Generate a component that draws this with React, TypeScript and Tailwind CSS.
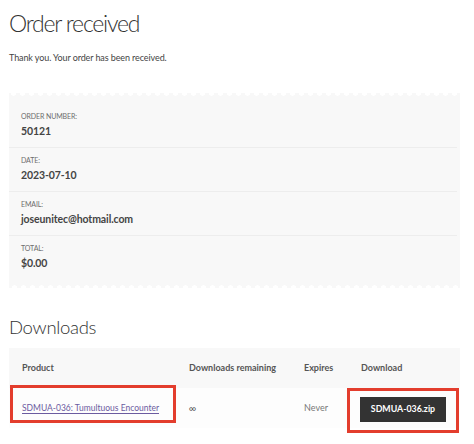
const font = { fontFamily: 'Lato, "Noto Sans", sans-serif' };

const overview = [
  { label: 'Order number:', value: '50121' },
  { label: 'Date:', value: '2023-07-10' },
  { label: 'Email:', value: 'joseunitec@hotmail.com' },
  { label: 'Total:', value: '$0.00' },
];

function Scallop() {
  return (
    <div className="h-[4px] w-full bg-[radial-gradient(circle_at_50%_0,white_2.5px,transparent_3px)] bg-[length:9px_4px]" />
  );
}

export default function App() {
  return (
    <div className="w-[474px] h-[444px] bg-white text-[#333] overflow-hidden" style={font}>
      <div className="px-[9px]">
        <h1 className="pt-[8px] text-[23px] leading-[30px] font-light tracking-[-1.2px] text-[#333]">Order received</h1>
        <p className="mt-[14px] text-[9px] leading-[12px] tracking-[-0.1px] text-[#444]">Thank you. Your order has been received.</p>

        <div className="mt-[29px] w-[451px] bg-[#f8f8f8]">
          <Scallop />
          <ul className="pt-[7px] pb-[4px] mr-[3px]">
            {overview.map((item, i) => (
              <li
                key={item.label}
                className={`h-[44px] pl-[12px] pt-[7px] ${i < overview.length - 1 ? 'border-b border-[#ededed]' : ''}`}
              >
                <div className="text-[7px] leading-[10px] uppercase text-[#6d6d6d] tracking-[-0.1px]">{item.label}</div>
                <div className="mt-[3px] text-[10.5px] leading-[14px] font-bold tracking-[-0.1px] text-[#444]">{item.value}</div>
              </li>
            ))}
          </ul>
          <div className="rotate-180">
            <Scallop />
          </div>
        </div>

        <h2 className="mt-[27px] text-[18.5px] leading-[24px] font-light tracking-[-0.3px] text-[#333]">Downloads</h2>

        <div className="relative mt-[9px] w-[451px]">
          <div className="grid grid-cols-[180px_115px_56px_100px] h-[40px] items-center bg-[#f8f8f8] text-[9px] font-bold text-[#555]">
            <div className="pl-[13px]">Product</div>
            <div>Downloads remaining</div>
            <div>Expires</div>
            <div className="pl-[1px]">Download</div>
          </div>
          <div className="grid grid-cols-[180px_115px_56px_100px] h-[40px] items-center bg-[#fdfdfd] text-[9px]">
            <div className="pl-[13px]">
              <a className="text-[8.5px] text-[#6b5ba0] underline underline-offset-[1.5px]">SDMUA-036: Tumultuous Encounter</a>
            </div>
            <div className="text-[#555] text-[10px]">∞</div>
            <div className="text-[#777]">Never</div>
            <div>
              <button className="mt-[2px] w-[86px] h-[25px] bg-[#333333] text-white font-bold text-[8.8px]">SDMUA-036.zip</button>
            </div>
          </div>

          <div className="absolute left-[1px] top-[37px] w-[166px] h-[38px] border-[3px] border-[#e33d2d]" />
          <div className="absolute left-[338px] top-[40px] w-[112px] h-[45px] border-[3px] border-[#e33d2d]" />
        </div>
      </div>
    </div>
  );
}
